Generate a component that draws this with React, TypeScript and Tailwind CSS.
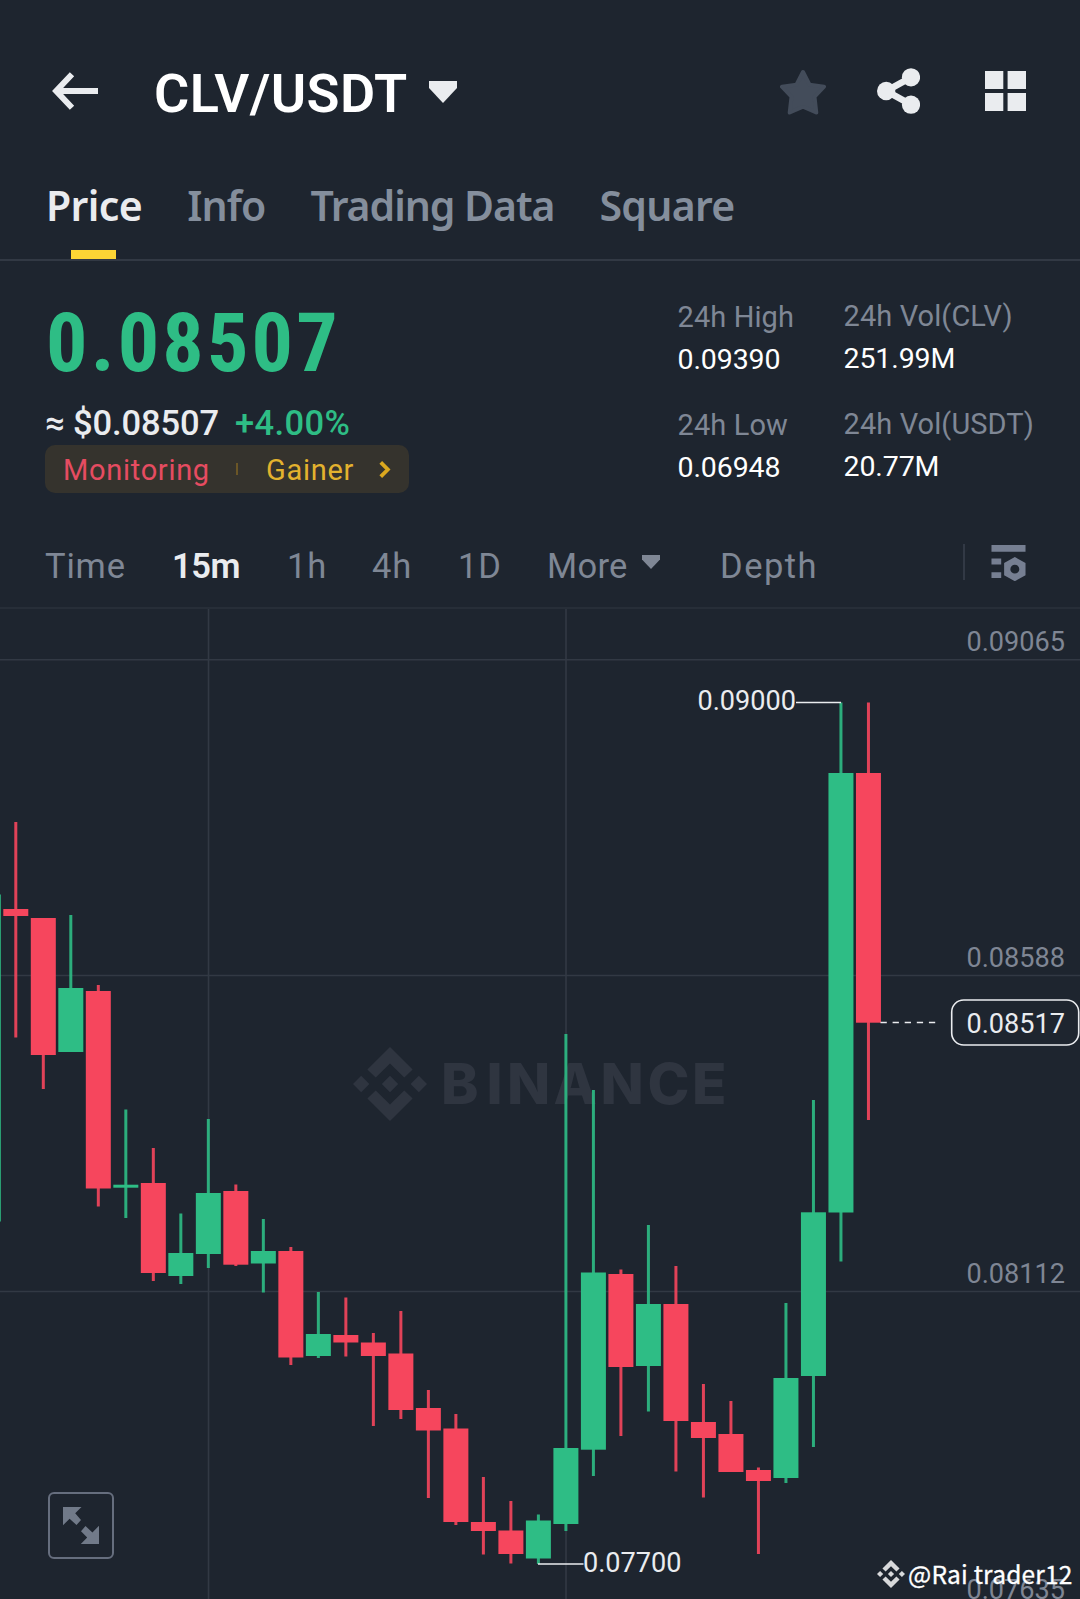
type Candle = [high: number, top: number, bottom: number, low: number, up: boolean];

const GREEN = "#2ebd85";
const RED = "#f6465d";

const candles: Candle[] = [
  [894.5, 894.5, 1221.5, 1221.5, true],
  [822, 909, 916, 1037.5, false],
  [918, 918, 1055, 1089, false],
  [915, 988, 1052, 1052, true],
  [985, 991, 1188.5, 1206.5, false],
  [1109.5, 1184.7, 1187.7, 1218, true],
  [1148, 1183, 1273, 1281, false],
  [1213.5, 1253, 1276, 1284, true],
  [1119, 1193, 1254, 1268, true],
  [1184.5, 1191, 1264.7, 1266, false],
  [1219, 1251, 1263.5, 1292.5, true],
  [1247, 1251, 1357.5, 1365, false],
  [1292, 1334, 1356, 1358, true],
  [1297.5, 1335, 1342.5, 1356.5, false],
  [1333, 1342.5, 1356, 1426, false],
  [1311, 1353.5, 1410, 1419, false],
  [1390, 1408, 1430.5, 1498, false],
  [1414, 1428.5, 1522, 1525, false],
  [1477, 1522, 1531, 1554.5, false],
  [1501, 1530.5, 1554, 1563.5, false],
  [1514.5, 1520.5, 1558.5, 1564, true],
  [1034, 1448, 1524, 1531, true],
  [1090, 1272.5, 1449.7, 1476, true],
  [1269.5, 1274, 1367, 1436, false],
  [1225, 1304, 1366, 1411.5, true],
  [1266, 1304, 1421, 1471.5, false],
  [1384, 1422, 1438, 1497.5, false],
  [1401, 1434, 1472, 1472, false],
  [1467.5, 1470, 1481, 1554, false],
  [1303, 1378, 1478, 1483, true],
  [1100, 1212.3, 1376, 1447, true],
  [702.5, 773, 1212.5, 1261.5, true],
  [702.5, 773, 1022.7, 1120, false],
];

const axis = [
  { label: "0.09065", y: 651 },
  { label: "0.08588", y: 967 },
  { label: "0.08112", y: 1283 },
  { label: "0.07635", y: 1598.5 },
];

function BinanceMark({ className }: { className: string }) {
  return (
    <svg viewBox="0 0 74 74" className={className} fill="currentColor">
      <path d="M37 0 59.6 22.4 51.3 30.6 37 16.4 22.7 30.6 14.4 22.4Z" />
      <path d="M37 74 59.6 51.6 51.3 43.4 37 57.6 22.7 43.4 14.4 51.6Z" />
      <path d="M0 37 8.2 28.8 16.4 37 8.2 45.2Z" />
      <path d="M57.6 37 65.8 28.8 74 37 65.8 45.2Z" />
      <path d="M28.8 37 37 28.8 45.2 37 37 45.2Z" />
    </svg>
  );
}

function Header() {
  return (
    <header className="flex h-[187px] items-center pl-[52px] pr-[54.5px] text-[#eaecef]">
      <svg viewBox="0 0 46 38" className="-mt-[5px] h-[38px] w-[46px]" fill="none" stroke="currentColor" strokeWidth="6">
        <path d="M46 19H5M20 2.3 4.2 19 20 35.7" />
      </svg>
      <h1 className="ml-[56px] w-[254px] whitespace-nowrap text-[54px] font-semibold leading-[66px] tracking-[0.4px] text-white">
        CLV/USDT
      </h1>
      <svg viewBox="0 0 28 22" className="-mt-1 ml-[21px] h-[22px] w-[28px]" fill="currentColor">
        <path d="M0 0H28V7L14 22 0 7Z" />
      </svg>
      <svg viewBox="0 0 46 48" preserveAspectRatio="none" className="-mt-1 ml-auto h-[46px] w-[46px] text-[#434c5a]" fill="currentColor" stroke="currentColor" strokeWidth="4" strokeLinejoin="round">
        <path d="M23 3 29.5 16.3 44 18.5 34.5 29 36.3 45.5 23 39.5 9.7 45.5 11.5 29 2 18.5 16.5 16.3Z" />
      </svg>
      <svg viewBox="0 0 43 46" className="-mt-[5px] ml-[51px] h-[46px] w-[43px]" fill="currentColor">
        <circle cx="9.2" cy="23" r="9.2" />
        <circle cx="34" cy="9.3" r="9.1" />
        <circle cx="34" cy="36.7" r="9.1" />
        <path d="M34 9.3 9.2 23 34 36.7" fill="none" stroke="currentColor" strokeWidth="6.6" />
      </svg>
      <svg viewBox="0 0 41 40" className="-mt-[5px] ml-[64.5px] h-[40px] w-[41px]" fill="currentColor">
        <path d="M0 0H18.3V18H0ZM22.6 0H41V18H22.6ZM0 22H18.3V40H0ZM22.6 22H41V40H22.6Z" />
      </svg>
    </header>
  );
}

function Tabs() {
  return (
    <nav className="flex h-[74px] gap-[45px] border-b-2 border-[#323944] pl-[46px] font-['Noto_Sans',sans-serif] text-[41px] font-semibold leading-[36px] tracking-[-0.9px] text-[#848e9c]">
      <span className="relative tracking-[-0.6px] text-[#eaecef]">
        Price
        <span className="absolute bottom-0 left-[25px] h-[9px] w-[45px] bg-[#fcd535]" />
      </span>
      <span>Info</span>
      <span className="tracking-[-1.05px]">Trading Data</span>
      <span className="tracking-[-0.7px]">Square</span>
    </nav>
  );
}

function Stat({ label, value }: { label: string; value: string }) {
  return (
    <div className="whitespace-nowrap leading-[41.8px]">
      <div className="text-[29px] tracking-[0.1px] text-[#7f8795]">{label}</div>
      <div className="text-[28.5px] tracking-[-0.1px] text-white">{value}</div>
    </div>
  );
}

function Summary() {
  return (
    <section className="flex h-[264px] pl-[45px]">
      <div className="w-[632.5px]">
        <div className="mt-[32px] h-[100px] whitespace-nowrap pl-px text-[82px] font-bold leading-[100px] tracking-[3.2px] text-[#2ebd85] [font-stretch:condensed]">
          0.08507
        </div>
        <div className="mt-[12px] flex h-[36px] whitespace-nowrap text-[34.5px] font-medium leading-[36px]">
          <span className="w-[190px] tracking-[-0.1px] text-[#eaecef]">≈ $0.08507</span>
          <span className="tracking-[0.4px] text-[#2ebd85]">+4.00%</span>
        </div>
        <div className="mt-[4px] flex h-[48px] w-[364px] items-center rounded-[10px] bg-[#35332d] pl-[18px] text-[29px] leading-[46px] tracking-[0.7px]">
          <span className="w-[173px] pt-[2px] text-[#e64c61]">Monitoring</span>
          <span className="h-[12px] w-[2px] bg-[#6b5626]" />
          <span className="ml-[28px] pt-[2px] text-[#e3b22e]">Gainer</span>
          <svg viewBox="0 0 12 18" className="ml-auto mr-[18px] h-[17px] w-[12px] text-[#dba81f]" fill="none" stroke="currentColor" strokeWidth="4">
            <path d="M1.5 1.5 9 9 1.5 16.5" />
          </svg>
        </div>
      </div>
      <div className="mt-[36px] flex w-[166px] flex-col gap-[24.4px]">
        <Stat label="24h High" value="0.09390" />
        <Stat label="24h Low" value="0.06948" />
      </div>
      <div className="mt-[35px] flex flex-col gap-[24.4px]">
        <Stat label="24h Vol(CLV)" value="251.99M" />
        <Stat label="24h Vol(USDT)" value="20.77M" />
      </div>
    </section>
  );
}

function Intervals() {
  return (
    <nav className="flex h-[84px] items-center border-b-2 border-[#272e38] pl-[45px] text-[34.5px] leading-[68px] tracking-[0.8px] text-[#7f8795]">
      <span className="w-[127px]">Time</span>
      <span className="w-[115px] font-semibold tracking-[-0.5px] text-[#eaecef]">15m</span>
      <span className="w-[85px]">1h</span>
      <span className="w-[86px]">4h</span>
      <span className="w-[89px]">1D</span>
      <span className="w-[94.5px] tracking-[0.3px]">More</span>
      <svg viewBox="0 0 18 14" className="-mt-2 h-[14px] w-[18px]" fill="currentColor">
        <path d="M0 0H18V4.5L9 14 0 4.5Z" />
      </svg>
      <span className="ml-[60.5px] tracking-[1.5px]">Depth</span>
      <span className="-mt-[8px] ml-auto h-[36px] w-[2.5px] bg-[#323945]" />
      <svg viewBox="0 0 35 37" className="-mt-[6px] ml-[25.5px] mr-[54.5px] h-[36px] w-[35px]" fill="#767f92">
        <path d="M0 0H35V7H0ZM0 14H10V20H0ZM0 28H10V34H0Z" />
        <path fillRule="evenodd" d="M24 12.3 35 18.5V31L24 37.2 13 31V18.5ZM24 20.2A4.6 4.6 0 1 0 24 29.4A4.6 4.6 0 1 0 24 20.2Z" />
      </svg>
    </nav>
  );
}

function Chart() {
  return (
    <svg viewBox="0 609 1080 990" className="block h-[990px] w-[1080px] font-['Roboto',sans-serif]">
      <g className="font-['Inter',sans-serif]" fill="#2f3540">
        <text x="441 486.5 507 553.5 600.5 647.5 692" y="1104" fontSize="56.5" fontWeight="800">
          BINANCE
        </text>
      </g>
      <g stroke="#323944" strokeWidth="1.6">
        <path d="M0 659.7H1080M0 975.5H1080M0 1291.5H1080M208.5 609V1599M566 609V1599" />
      </g>
      {candles.map(([high, top, bottom, low, up], i) => {
        const x = 15.8 + (i - 1) * 27.505;
        return (
          <g key={i} fill={up ? GREEN : RED}>
            {i > 0 && <rect x={x - 1.5} y={high} width="3" height={low - high} opacity="0.9" />}
            <rect x={x - 12.5} y={top} width="25" height={bottom - top} />
          </g>
        );
      })}
      <g fontSize="27.1" fill="#7f8694">
        {axis.map(({ label, y }) => (
          <text key={label} x="966.5" y={y}>{label}</text>
        ))}
      </g>
      <g fill="none" stroke="#eaecef" strokeWidth="1.6">
        <path d="M796 702.5H841M538 1564H583.5" />
        <path d="M880.5 1022.5H936" strokeDasharray="6.3 5.8" />
        <rect x="951.7" y="1000" width="127" height="45" rx="12" />
      </g>
      <g fontSize="27.1" fill="#eaecef">
        <text x="697.5" y="709.5">0.09000</text>
        <text x="583" y="1571.7">0.07700</text>
        <text x="966.5" y="1033">0.08517</text>
      </g>
    </svg>
  );
}

export default function App() {
  return (
    <div className="h-[1599px] w-[1080px] overflow-hidden bg-[#1e252f] font-['Roboto',sans-serif]">
      <Header />
      <Tabs />
      <Summary />
      <Intervals />
      <div className="relative h-[990px]">
        <Chart />
        <BinanceMark className="absolute left-[353px] top-[438px] h-[74px] w-[74px] text-[#2f3540]" />
        <button className="absolute left-[48px] top-[883px] flex h-[67px] w-[66px] items-center justify-center rounded-[6px] border-2 border-[#666e7e]">
          <svg viewBox="0 0 36 37" className="h-[37px] w-[36px]" fill="#717a89">
            <path d="M0 0H18.5L12.2 6.3 18 13 13.5 18 6.6 11.7 0 18.3ZM36 37H17.8L24.2 30.5 18 24.3 22.5 19 29.4 25.5 36 18.7Z" />
          </svg>
        </button>
        <div className="absolute left-[877px] top-[947px] flex items-center gap-[3px] whitespace-nowrap text-white">
          <BinanceMark className="h-[28px] w-[28px] text-[#d8d9db]" />
          <span className="font-['Noto_Sans_CJK_SC',sans-serif] text-[24.5px] font-normal leading-[36px] tracking-[0.2px] [-webkit-text-stroke:0.3px_white]">@Rai trader12</span>
        </div>
      </div>
    </div>
  );
}
